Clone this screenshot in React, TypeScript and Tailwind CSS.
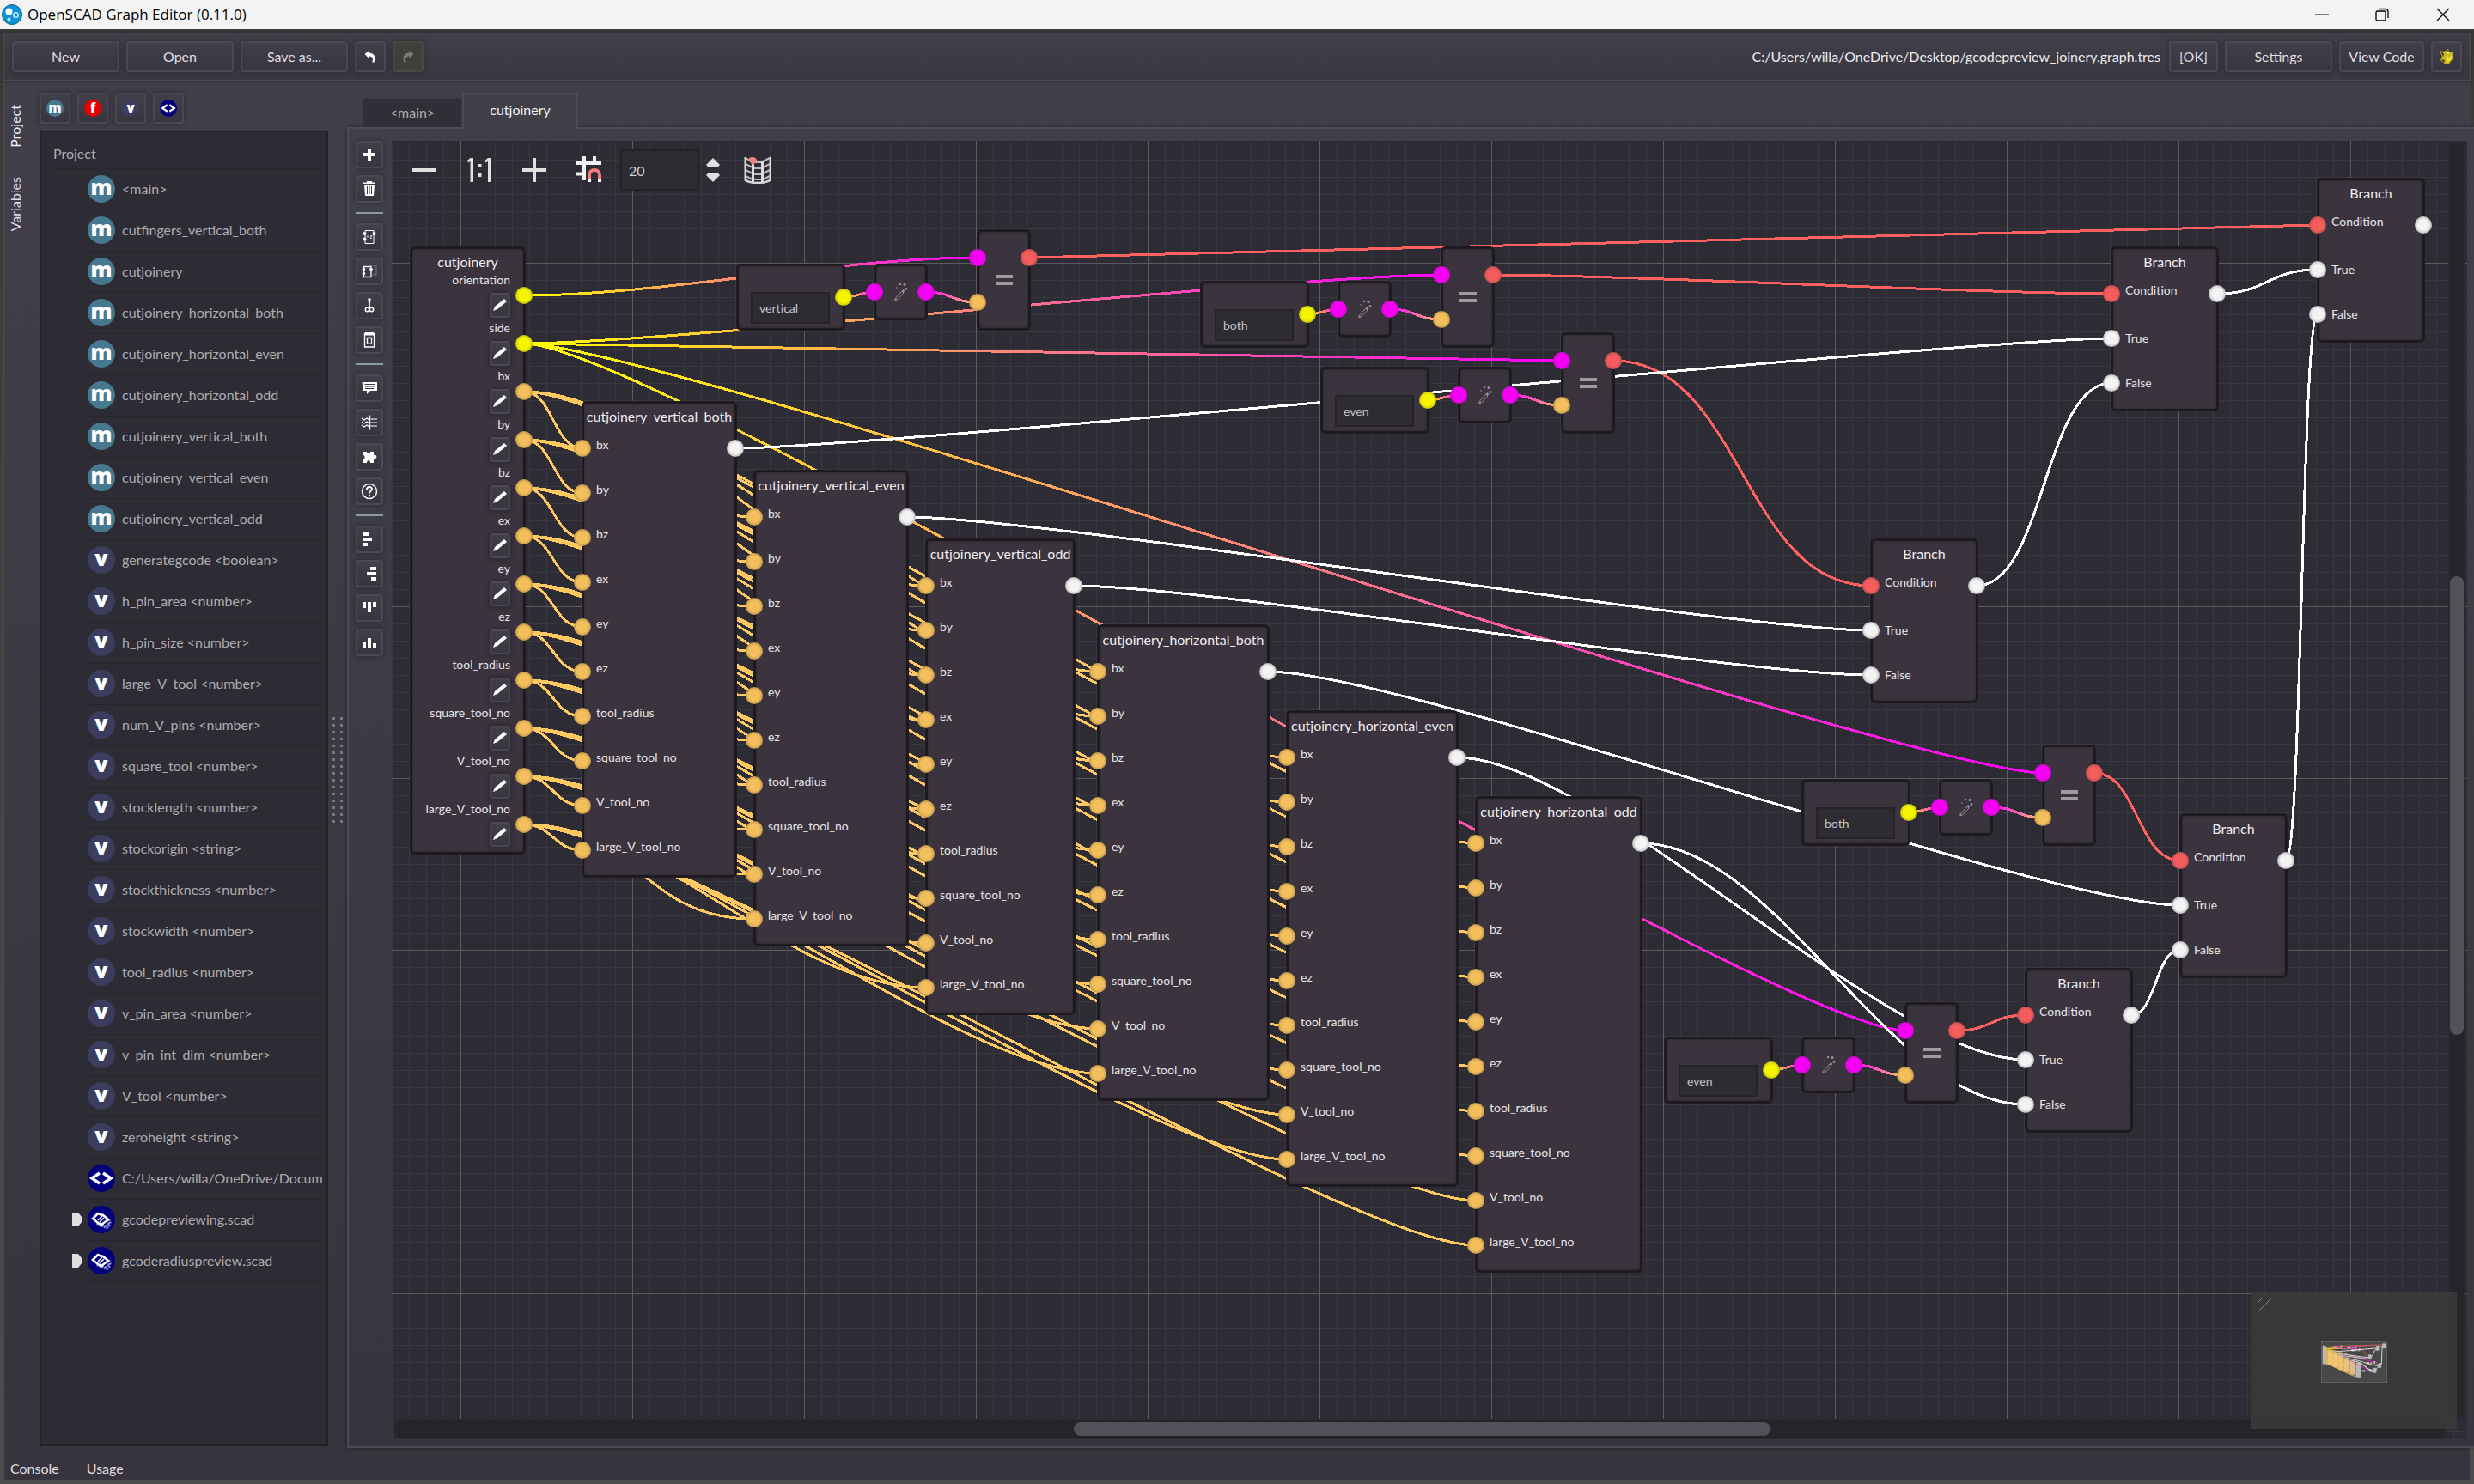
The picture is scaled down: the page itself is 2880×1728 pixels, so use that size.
import type { ReactNode } from "react";
import clsx from "clsx";

type Kind = "string" | "number" | "any" | "bool" | "geometry";

interface Port {
  side: "left" | "right";
  y: number;
  kind: Kind;
}

interface GraphNode {
  id: string;
  type: "entry" | "module" | "text" | "cast" | "equals" | "branch";
  x: number;
  y: number;
  w: number;
  h: number;
  title?: string;
  ports: Port[];
}

interface Wire {
  from: [number, number];
  to: [number, number];
  a: Kind;
  b: Kind;
}

const colors: Record<Kind, string> = {
  string: "#ffff00",
  number: "#ffc861",
  any: "#ff00ff",
  bool: "#ff6060",
  geometry: "#ffffff",
};

const portStyles: Record<Kind, string> = {
  string: "bg-[radial-gradient(circle,#f5f500_45%,#c6c60a_70%)]",
  number: "bg-[radial-gradient(circle,#f3bf5c_45%,#c49a4e_70%)]",
  any: "bg-[radial-gradient(circle,#f500f5_45%,#dc06dc_70%)]",
  bool: "bg-[radial-gradient(circle,#f55c5c_45%,#c85050_70%)]",
  geometry: "bg-[radial-gradient(circle,#f3f3f3_45%,#bdbdbd_70%)]",
};

const numberArgs = ["bx", "by", "bz", "ex", "ey", "ez", "tool_radius", "square_tool_no", "V_tool_no", "large_V_tool_no"];
const entryArgs = ["orientation", "side", ...numberArgs];

const tree = [
  ["m", "<main>"],
  ["m", "cutfingers_vertical_both"],
  ["m", "cutjoinery"],
  ["m", "cutjoinery_horizontal_both"],
  ["m", "cutjoinery_horizontal_even"],
  ["m", "cutjoinery_horizontal_odd"],
  ["m", "cutjoinery_vertical_both"],
  ["m", "cutjoinery_vertical_even"],
  ["m", "cutjoinery_vertical_odd"],
  ["v", "generategcode <boolean>"],
  ["v", "h_pin_area <number>"],
  ["v", "h_pin_size <number>"],
  ["v", "large_V_tool <number>"],
  ["v", "num_V_pins <number>"],
  ["v", "square_tool <number>"],
  ["v", "stocklength <number>"],
  ["v", "stockorigin <string>"],
  ["v", "stockthickness <number>"],
  ["v", "stockwidth <number>"],
  ["v", "tool_radius <number>"],
  ["v", "v_pin_area <number>"],
  ["v", "v_pin_int_dim <number>"],
  ["v", "V_tool <number>"],
  ["v", "zeroheight <string>"],
  ["code", "C:/Users/willa/OneDrive/Docum"],
  ["lib", "gcodepreviewing.scad"],
  ["lib", "gcoderadiuspreview.scad"],
];

function moduleNode(title: string, x: number, y: number, w: number): GraphNode {
  const ports: Port[] = numberArgs.map((_, i) => ({ side: "left", y: 55 + i * 52, kind: "number" }));
  ports.push({ side: "right", y: 55, kind: "geometry" });
  return { id: title, type: "module", title, x, y, w, h: 555, ports };
}

function compareNodes(text: string, x: number, y: number): GraphNode[] {
  return [
    { id: `text-${x}`, type: "text", title: text, x, y: y + 40, w: 127, h: 78, ports: [{ side: "right", y: 39, kind: "string" }] },
    {
      id: `cast-${x}`,
      type: "cast",
      x: x + 160,
      y: y + 40,
      w: 63,
      h: 66,
      ports: [
        { side: "left", y: 33, kind: "any" },
        { side: "right", y: 33, kind: "any" },
      ],
    },
    {
      id: `equals-${x}`,
      type: "equals",
      x: x + 280,
      y,
      w: 63,
      h: 118,
      ports: [
        { side: "left", y: 33, kind: "any" },
        { side: "left", y: 85, kind: "number" },
        { side: "right", y: 33, kind: "bool" },
      ],
    },
  ];
}

function branchNode(x: number, y: number): GraphNode {
  return {
    id: `branch-${x}`,
    type: "branch",
    title: "Branch",
    x,
    y,
    w: 126,
    h: 192,
    ports: [
      { side: "left", y: 55, kind: "bool" },
      { side: "left", y: 107, kind: "geometry" },
      { side: "left", y: 159, kind: "geometry" },
      { side: "right", y: 55, kind: "geometry" },
    ],
  };
}

const entry: GraphNode = {
  id: "entry",
  type: "entry",
  title: "cutjoinery",
  x: 21,
  y: 123,
  w: 135,
  h: 708,
  ports: entryArgs.map((_, i) => ({ side: "right", y: 57 + i * 56, kind: i < 2 ? "string" : "number" })),
};

const modules = [
  moduleNode("cutjoinery_vertical_both", 221, 303, 181),
  moduleNode("cutjoinery_vertical_even", 421, 383, 181),
  moduleNode("cutjoinery_vertical_odd", 621, 463, 175),
  moduleNode("cutjoinery_horizontal_both", 821, 563, 201),
  moduleNode("cutjoinery_horizontal_even", 1041, 663, 201),
  moduleNode("cutjoinery_horizontal_odd", 1261, 763, 195),
];

const comparisons = [
  compareNodes("vertical", 401, 103),
  compareNodes("both", 941, 123),
  compareNodes("even", 1081, 223),
  compareNodes("both", 1641, 703),
  compareNodes("even", 1481, 1003),
];

const branches = [
  branchNode(2241, 43),
  branchNode(2001, 123),
  branchNode(1721, 463),
  branchNode(2081, 783),
  branchNode(1901, 963),
];

const nodes = [entry, ...modules, ...comparisons.flat(), ...branches];

function connect(from: GraphNode, out: number, to: GraphNode, input: number): Wire {
  const a = from.ports.filter((p) => p.side === "right")[out];
  const b = to.ports.filter((p) => p.side === "left")[input];
  return {
    from: [from.x + from.w - 2, from.y + a.y],
    to: [to.x + 1, to.y + b.y],
    a: a.kind,
    b: b.kind,
  };
}

const wires: Wire[] = [
  ...modules.flatMap((m) => numberArgs.map((_, i) => connect(entry, i + 2, m, i))),
  ...comparisons.flatMap(([text, cast, equals], i) => [
    connect(entry, i === 0 ? 0 : 1, equals, 0),
    connect(text, 0, cast, 0),
    connect(cast, 0, equals, 1),
    connect(equals, 0, branches[i], 0),
  ]),
  connect(modules[0], 0, branches[1], 1),
  connect(modules[1], 0, branches[2], 1),
  connect(modules[2], 0, branches[2], 2),
  connect(modules[3], 0, branches[3], 1),
  connect(modules[4], 0, branches[4], 1),
  connect(modules[5], 0, branches[4], 2),
  connect(branches[1], 0, branches[0], 1),
  connect(branches[2], 0, branches[1], 2),
  connect(branches[3], 0, branches[0], 2),
  connect(branches[4], 0, branches[3], 2),
];

function wirePath({ from, to }: Wire) {
  const bend = Math.min(160, (to[0] - from[0]) / 2);
  return `M${from[0]} ${from[1]}C${from[0] + bend} ${from[1]} ${to[0] - bend} ${to[1]} ${to[0]} ${to[1]}`;
}

function Wires({ id, width }: { id: string; width: number }) {
  return (
    <>
      {wires.map((wire, i) => (
        <g key={i}>
          {wire.a !== wire.b && (
            <linearGradient id={`${id}-${i}`} gradientUnits="userSpaceOnUse" x1={wire.from[0]} y1="0" x2={wire.to[0]} y2="0">
              <stop offset="0" stopColor={colors[wire.a]} />
              <stop offset="1" stopColor={colors[wire.b]} />
            </linearGradient>
          )}
          <path d={wirePath(wire)} fill="none" stroke={wire.a === wire.b ? colors[wire.a] : `url(#${id}-${i})`} strokeWidth={width} />
        </g>
      ))}
    </>
  );
}

function Button({ className, label, disabled, children }: { className?: string; label?: string; disabled?: boolean; children: ReactNode }) {
  return (
    <button
      aria-label={label}
      disabled={disabled}
      className={clsx(
        "flex shrink-0 items-center justify-center rounded-sm border-2 shadow-[0_0_5px_2px_rgba(0,0,0,0.18)]",
        disabled ? "border-[#484844] bg-[#3f3f3b] text-[#7b7b78]" : "border-[#4a4854] bg-linear-to-b from-[#413f4a] to-[#37353e] text-[#e0dfe2]",
        className,
      )}
    >
      {children}
    </button>
  );
}

function Badge({ kind, small }: { kind: string; small?: boolean }) {
  return (
    <span
      className={clsx(
        "flex shrink-0 items-center justify-center rounded-full font-['Open_Sans',sans-serif] font-extrabold text-white",
        small ? "size-5 pb-0.5 text-[15px]" : "size-8 pb-1 text-[25px]",
        kind === "m" && "bg-[#46788f]",
        kind === "f" && "bg-[#e60000]",
        kind === "v" && "bg-[#3c3c5e]",
        (kind === "code" || kind === "lib") && "bg-[#00007f]",
      )}
    >
      {kind === "code" && (
        <svg viewBox="0 0 32 32" className={clsx("shrink-0", small ? "mt-0.5 size-5" : "mt-1 size-8")} fill="none" stroke="white" strokeWidth="3.5">
          <path d="M14 10 5 16l9 6M18 10l9 6-9 6" />
        </svg>
      )}
      {kind === "lib" && (
        <svg viewBox="0 0 32 32" className="mt-1 size-8 shrink-0" fill="none">
          <path d="M11 20l11 5 4-4-2-5" stroke="#9c9cd0" strokeWidth="4" strokeDasharray="2 1" />
          <path d="M12 9 6 15l6 5 4 2 8-6-6-5-4-1z" stroke="white" strokeWidth="2.500" />
          <path d="M12 17l5-5M14 19l5-5" stroke="white" strokeWidth="1.500" />
        </svg>
      )}
      {kind.length === 1 && kind}
    </span>
  );
}

function Icon({ name }: { name: string }) {
  const shapes: Record<string, ReactNode> = {
    add: <path d="M8 3h4v5h5v4h-5v5H8v-5H3V8h5z" />,
    trash: (
      <>
        <path d="M7 1h6v1.500h4V4H3V2.500h4z" />
        <path d="M4 5h12l-1 13H5zM7 7v9h1V7zm2.500 0v9h1V7zM12 7v9h1V7z" fillRule="evenodd" />
      </>
    ),
    node: (
      <>
        <path d="M5 2.500h10v15H5z" fill="none" stroke="currentColor" />
        <circle cx="4.500" cy="6" r="2" />
        <circle cx="15.500" cy="6" r="2" />
        <circle cx="4.500" cy="12.500" r="2" />
        <path d="M7 8.500l2 2m0-2-2 2M11 8.500h2l-2 3h2" fill="none" stroke="currentColor" strokeWidth="0.800" />
      </>
    ),
    duplicate: (
      <>
        <path d="M9 3h9v11h-4" fill="none" stroke="currentColor" opacity="0.350" />
        <path d="M3.500 4.500h8.500v12H3.500z" fill="none" stroke="currentColor" strokeWidth="1.300" />
        <circle cx="3.500" cy="7.500" r="1.800" />
        <circle cx="12" cy="7.500" r="1.800" />
        <circle cx="3.500" cy="12.500" r="1.800" />
      </>
    ),
    cut: (
      <>
        <path d="M9 1.500 10.500 12M11 1.500 9.500 12" fill="none" stroke="currentColor" strokeWidth="1.500" />
        <circle cx="7.500" cy="14.500" r="2.200" fill="none" stroke="currentColor" strokeWidth="1.500" />
        <circle cx="12.500" cy="14.500" r="2.200" fill="none" stroke="currentColor" strokeWidth="1.500" />
      </>
    ),
    paste: (
      <>
        <path d="M4.500 2.500h11v15.500h-11z" fill="none" stroke="currentColor" strokeWidth="1.300" />
        <path d="M5 1h10v3.500H5z" />
        <path d="M7.500 7h5v7h-5z" fill="none" stroke="currentColor" />
        <circle cx="7.500" cy="9" r="1" />
        <circle cx="12.500" cy="9" r="1" />
        <circle cx="7.500" cy="12" r="1" />
      </>
    ),
    comment: <path d="M1.500 3h17.500v10h-8l-4 4v-4H3zM4.500 5v1h12V5zm0 2.500v1h12v-1zM5 10v1h10v-1z" fillRule="evenodd" />,
    straighten: (
      <path
        d="M1 5l3 2 3-2 3 2M1 9l3 2 3-2 3 2M1 13l3 2 3-2 3 2M10.500 1.500v17M10 6h9M10 10h9M10 14h9"
        fill="none"
        stroke="currentColor"
        strokeWidth="1.200"
      />
    ),
    puzzle: <path d="M3 4h4c0 3 4 3 4 0h4v4c4-2 5 5 0 4v5h-4c0-4-4-4-4 0H3v-4c2 0 2-5 0-5z" />,
    help: (
      <>
        <circle cx="10" cy="10" r="8.500" fill="none" stroke="currentColor" strokeWidth="1.500" />
        <path d="M7 8c0-4 6-4 6-.500C13 9.500 10 9.500 10 12.500" fill="none" stroke="currentColor" strokeWidth="2" />
        <circle cx="10" cy="15" r="1.200" />
      </>
    ),
    left: <path d="M2 2h7v4H2zM2 8h11v4H2zM2 14h6v4H2z" />,
    right: <path d="M11 2h7v4h-7zM7 8h11v4H7zM12 14h6v4h-6z" />,
    top: <path d="M2 3h4v7H2zM8 3h4v12H8zM14 3h4v6h-4z" />,
    bottom: <path d="M2 10h4v7H2zM8 5h4v12H8zM14 11h4v6h-4z" />,
  };
  return (
    <svg viewBox="0 0 20 20" className="size-5 shrink-0 text-white" fill="currentColor">
      {shapes[name]}
    </svg>
  );
}

const toolGroups = [
  ["add", "trash"],
  ["node", "duplicate", "cut", "paste"],
  ["comment", "straighten", "puzzle", "help"],
  ["left", "right", "top", "bottom"],
];

function NodeBody({ node }: { node: GraphNode }) {
  if (node.type === "text") {
    return (
      <input
        aria-label="Text"
        defaultValue={node.title}
        className="mt-[30px] ml-3.5 h-[37px] w-[92px] border-2 border-[#25232a] bg-[#2d2c33] pl-2 text-sm text-[#c4c3c8]"
      />
    );
  }
  if (node.type === "cast") {
    return (
      <div className="flex h-full items-center justify-center">
        <svg viewBox="0 0 18 22" className="h-[22px] w-[18px] text-[#958f98]" fill="none" stroke="currentColor">
          <path d="M2.500 18 10 10l2 2-7.500 8z" />
          <g fill="currentColor" stroke="none">
            <path d="M1.500 18l3 3-3 0zM9.500 10l2-2 2 2-2 2z" />
            <circle cx="8" cy="2" r="1.200" />
            <circle cx="13" cy="2.500" r="1.600" />
            <circle cx="15" cy="7.500" r="1.400" />
            <circle cx="4" cy="6" r="0.800" />
          </g>
        </svg>
      </div>
    );
  }
  if (node.type === "equals") {
    return (
      <div className="flex h-full flex-col items-center justify-center gap-1">
        <span className="h-1 w-5 bg-[#a09aa2]" />
        <span className="h-1 w-5 bg-[#a09aa2]" />
      </div>
    );
  }
  return (
    <>
      <h2 className="pt-[5px] pb-px text-center text-base/5 whitespace-nowrap text-[#eeedef]">{node.title}</h2>
      {node.type === "entry" && (
        <ul className="pr-[15px]">
          {entryArgs.map((arg) => (
            <li key={arg} className="flex h-14 flex-col items-end gap-[5px] text-sm/5 text-[#e6e5e8]">
              {arg}
              <Button label={`Rename ${arg}`} className="h-[29px] w-6">
                <svg viewBox="0 1 20 20" className="size-5 shrink-0" fill="white">
                  <path d="M2 17 4 12 15 3l3 3L7 15z" />
                </svg>
              </Button>
            </li>
          ))}
        </ul>
      )}
      {node.type === "module" && (
        <ul className="pl-3.5">
          {numberArgs.map((arg) => (
            <li key={arg} className="flex h-[52px] items-center pb-2 text-sm text-[#e6e5e8]">
              {arg}
            </li>
          ))}
        </ul>
      )}
      {node.type === "branch" && (
        <ul className="pl-3.5 text-sm text-[#e6e5e8]">
          <li className="flex h-[52px] items-center pb-2">Condition</li>
          <li className="flex h-[52px] items-center">True</li>
          <li className="flex h-[52px] items-center">False</li>
        </ul>
      )}
    </>
  );
}

function NodeCard({ node }: { node: GraphNode }) {
  return (
    <section
      className="absolute rounded-md border-3 border-[#1d1b20] bg-[#3b333d] shadow-[inset_0_0_3px_rgba(0,0,0,0.3)]"
      style={{ left: node.x, top: node.y, width: node.w, height: node.h }}
    >
      <NodeBody node={node} />
      {node.ports.map((port, i) => (
        <span
          key={i}
          className={clsx("absolute size-5 rounded-full", port.side === "left" ? "-left-3" : "-right-[11px]", portStyles[port.kind])}
          style={{ top: port.y - 13 }}
        />
      ))}
    </section>
  );
}

function ZoomBar() {
  const tool = "flex h-12 w-14 items-center justify-center text-[#e0e0e0]";
  return (
    <div className="absolute top-2.5 left-2.5 flex items-center gap-2">
      <button aria-label="Zoom out" className={tool}>
        <svg viewBox="0 0 32 32" className="size-8" fill="currentColor">
          <path d="M2 14h28v4H2z" />
        </svg>
      </button>
      <button aria-label="Reset zoom" className={tool}>
        <svg viewBox="0 0 32 32" className="size-8" fill="currentColor">
          <path d="M5.500 2H9v28H5.500V6L2.500 7.500V4.500zM26 2h3.500v28H26V6l-3 1.500V4.500zM14.500 9h4v4h-4zM14.500 20h4v4h-4z" />
        </svg>
      </button>
      <button aria-label="Zoom in" className={tool}>
        <svg viewBox="0 0 32 32" className="size-8" fill="currentColor">
          <path d="M14 2h4v12h12v4H18v12h-4V18H2v-4h12z" />
        </svg>
      </button>
      <button aria-label="Snap to grid" className={tool}>
        <svg viewBox="0 0 32 32" className="size-8">
          <path d="M8 0h4v6h8V0h4v6h6v4H12v18H8v-5.500H0v-4h8V10H0V6h8z" fill="#f0f0f0" />
          <path d="M16 26v-4a6 6 0 0 1 12 0v4" fill="none" stroke="#f47c7c" strokeWidth="4" />
          <path d="M14 26h4v4h-4zM26 26h4v4h-4z" fill="white" />
        </svg>
      </button>
      <div className="flex">
        <input aria-label="Grid size" defaultValue="20" className="h-12 w-[92px] border-2 border-[#232127] bg-[#2d2c33] pl-2 text-base text-[#d0cfd3]" />
        <div className="flex w-8 flex-col items-center justify-center gap-2">
          <button aria-label="Increase">
            <svg viewBox="0 0 16 10" className="h-2.5 w-4 fill-[#e0e0e0]">
              <path d="M8 0 16 8 14 10H2L0 8z" />
            </svg>
          </button>
          <button aria-label="Decrease">
            <svg viewBox="0 0 16 10" className="h-2.5 w-4 fill-[#e0e0e0]">
              <path d="M8 10 0 2 2 0h12l2 2z" />
            </svg>
          </button>
        </div>
      </div>
      <button aria-label="Toggle minimap" className={tool}>
        <svg viewBox="0 0 32 32" className="size-8" fill="none" stroke="#dcdcdc">
          <path d="M1.500 1v27C8 32 24 32 30.500 28V1" strokeWidth="2" />
          <path d="M10.500 8v22M21.500 5v25" strokeWidth="3" />
          <path d="M2 2l8 5M22 6l8-4M10 7h12M2 9l8 4M10 14h12M22 13l8-4M2 16l8 4M10 21h12M22 20l8-4M2 23l8 4M10 27h12M22 27l8-4" strokeWidth="2" opacity="0.800" />
          <path d="M2 28c8 4 20 4 28 0" strokeWidth="3" opacity="0.700" />
          <path d="M6 2c3-2 8-1 9 2 0 3-3 4-4.500 7C9 8 5 6 6 2z" fill="#f08080" stroke="none" />
        </svg>
      </button>
    </div>
  );
}

function Minimap() {
  return (
    <div className="absolute right-3 bottom-3 h-40 w-60 bg-[#3a3a3a]/92">
      <svg viewBox="0 0 16 16" className="m-2 size-4 stroke-[#8a8a8a]" fill="none">
        <path d="M0 16 16 0M0 5l5-5" />
      </svg>
      <svg
        viewBox="0 0 2394 1490"
        preserveAspectRatio="none"
        className="absolute top-[58px] left-[82px] h-12 w-[77px] border border-[#5f5f5f] bg-[#484848]"
      >
        {nodes.map((node) => (
          <rect key={node.id} x={node.x} y={node.y} width={node.w} height={node.h} rx="40" fill="#b8b8b8" />
        ))}
        <g opacity="0.850">
          <Wires id="mini" width={30} />
        </g>
      </svg>
    </div>
  );
}

function Canvas() {
  return (
    <div className="relative min-w-0 flex-1 overflow-hidden bg-[#2d2b34]">
      <svg className="absolute inset-0 size-full" shapeRendering="crispEdges">
        <defs>
          <pattern id="minor" width="20" height="20" y="2" patternUnits="userSpaceOnUse">
            <path d="M0 0h20v1H1v19H0z" fill="white" fillOpacity="0.060" />
          </pattern>
          <pattern id="major" width="200" height="200" x="80" y="142" patternUnits="userSpaceOnUse">
            <path d="M0 0h200v1H1v199H0z" fill="white" fillOpacity="0.180" />
          </pattern>
        </defs>
        <rect width="100%" height="100%" fill="url(#minor)" />
        <rect width="100%" height="100%" fill="url(#major)" />
        <Wires id="wire" width={3} />
      </svg>
      {nodes.map((node) => (
        <NodeCard key={node.id} node={node} />
      ))}
      <ZoomBar />
      {/* scroll bars */}
      <div className="absolute top-0 right-0.5 bottom-6 flex w-5 flex-col rounded-lg border-2 border-[#2b2930] bg-[#252429]">
        <div className="h-[34%]" />
        <div className="h-[36%] rounded-full bg-[#52515a]" />
      </div>
      <div className="absolute right-6 bottom-0 left-0.5 h-6 rounded-lg border-2 border-[#2b2930] bg-[#252429] py-0.5">
        <div className="ml-[33.1%] h-4 w-[34%] rounded-full bg-[#52515a]" />
      </div>
      <Minimap />
    </div>
  );
}

function TitleBar() {
  return (
    <header className="flex h-[34px] shrink-0 items-center bg-[#f3f3f3] pl-0.5 font-['Open_Sans','Noto_Sans',sans-serif] text-black">
      <svg viewBox="0 0 24 24" className="size-6">
        <circle cx="12" cy="12" r="11.500" fill="#0a94dc" stroke="#20607f" />
        <circle cx="8.500" cy="8.500" r="4" fill="white" />
        <circle cx="16.500" cy="12.500" r="2.800" fill="none" stroke="#c8ecfc" strokeWidth="1.500" />
        <circle cx="8.500" cy="17.500" r="2" fill="#c8ecfc" />
      </svg>
      <h1 className="ml-1.5 text-[17px]">OpenSCAD Graph Editor (0.11.0)</h1>
      <div className="ml-auto flex">
        <button aria-label="Minimize" className="flex h-8 w-[70px] items-center justify-center">
          <svg viewBox="0 0 16 16" className="size-4" stroke="black">
            <path d="M0 8h16" />
          </svg>
        </button>
        <button aria-label="Restore" className="flex h-8 w-[70px] items-center justify-center">
          <svg viewBox="0 0 16 16" className="size-4" fill="none" stroke="black" strokeWidth="1.300">
            <rect x="1" y="4" width="11" height="11" rx="1.500" />
            <path d="M4 1.500h8a3 3 0 0 1 3 3V12" />
          </svg>
        </button>
        <button aria-label="Close" className="flex h-8 w-[72px] items-center justify-center">
          <svg viewBox="0 0 16 16" className="size-4" stroke="black" strokeWidth="1.300">
            <path d="M1 1l14 14M15 1 1 15" />
          </svg>
        </button>
      </div>
    </header>
  );
}

function Toolbar() {
  return (
    <div className="flex h-14 shrink-0 items-center gap-2 border border-[#4c4a56] bg-linear-to-b from-[#413f49] to-[#393740] px-[9px] shadow-[0_1px_4px_rgba(0,0,0,0.3)]">
      <Button className="h-9 w-[125px]">New</Button>
      <Button className="h-9 w-[125px]">Open</Button>
      <Button className="h-9 w-[125px]">Save as...</Button>
      <Button className="size-9" label="Undo">
        <svg viewBox="0 0 16 16" className="size-4 shrink-0" fill="white">
          <path d="M1.500 5 6.500 1v2.500c5 0 9 4.500 6 11h-2.500c2.500-4.500 0-7-3.500-7V10z" />
        </svg>
      </Button>
      <Button className="size-9" label="Redo" disabled>
        <svg viewBox="0 0 16 16" className="size-4 shrink-0" fill="currentColor">
          <path d="M14.500 5 9.500 1v2.500c-5 0-9 4.500-6 11H6c-2.500-4.500 0-7 3.500-7V10z" />
        </svg>
      </Button>
      <span className="ml-auto pr-0.5 text-[#eeedef]">C:/Users/willa/OneDrive/Desktop/gcodepreview_joinery.graph.tres</span>
      <Button className="h-9 w-[57px]">[OK]</Button>
      <Button className="h-9 w-[125px]">Settings</Button>
      <Button className="h-9 w-[99px]">View Code</Button>
      <Button className="size-9" label="Run">
        <svg viewBox="0 0 20 20" className="size-5 shrink-0">
          <path d="M2 3 7 4l5-3 2 3 4 2-1 7-4 5H8l-5-4 2-4z" fill="#c9b81e" />
          <path d="M9 9l4 2 3-3-1 6-4 3z" fill="#e9e03c" />
          <path d="M3 3l4 4-1 3zM9 2l3 4 3-3M4 13l4 1-1 3" fill="#35351a" />
          <circle cx="12" cy="5" r="1.500" fill="#f7f3a0" />
        </svg>
      </Button>
    </div>
  );
}

function Sidebar() {
  return (
    <aside className="flex w-[336px] shrink-0 flex-col gap-2 pt-3.5 pb-0.5">
      <div className="flex gap-2">
        {["m", "f", "v", "code"].map((kind) => (
          <Button key={kind} label={kind} className="size-9">
            <Badge kind={kind} small />
          </Button>
        ))}
      </div>
      <div className="min-h-0 flex-1 border-2 border-[#232227] bg-[#2d2b34] text-[#adacb0]">
        <div className="mr-1.5 ml-3.5 flex h-[43px] items-center border-b border-[#26252b] pt-2">Project</div>
        <ul>
          {tree.map(([kind, label]) => (
            <li key={label} className="flex h-12">
              <span className="flex w-[54px] shrink-0 items-center justify-end pr-1.5 pb-0.5">
                {kind === "lib" && (
                  <svg viewBox="0 0 12 16" className="h-4 w-3 fill-[#dedede]">
                    <path d="M0 0h7l5 6v4l-5 6H0z" />
                  </svg>
                )}
              </span>
              <span className="mr-1.5 flex min-w-0 flex-1 items-center gap-2 border-b border-[#26252b] pb-0.5 whitespace-nowrap">
                <Badge kind={kind} />
                {label}
              </span>
            </li>
          ))}
        </ul>
      </div>
    </aside>
  );
}

export default function App() {
  return (
    <div className="flex h-screen flex-col overflow-hidden bg-linear-to-b from-[#383835] to-[#4d4d4b] font-[Lato,sans-serif] text-base text-[#e0dfe2]">
      <TitleBar />
      <div className="m-1 flex min-h-0 flex-1 flex-col bg-linear-to-b from-[#423f4a] to-[#37343d]">
        <Toolbar />
        <main className="flex min-h-0 flex-1 border-l border-[#4c4a56]">
          <nav className="flex w-[41px] shrink-0 flex-col items-start gap-[34px] pt-7 pl-px">
            <button className="rotate-180 text-[#f4f4f5] [writing-mode:vertical-rl]">Project</button>
            <button className="rotate-180 [writing-mode:vertical-rl]">Variables</button>
          </nav>
          <Sidebar />
          <div className="flex w-[22px] shrink-0 items-center justify-center pt-3">
            <div className="grid grid-cols-2 gap-x-1.5 gap-y-[5px]">
              {Array.from({ length: 32 }, (_, i) => (
                <span key={i} className="size-[3px] bg-[#77767d]" />
              ))}
            </div>
          </div>
          <div className="-mr-1 flex min-w-0 flex-1 flex-col pt-3.5">
            <div className="z-10 flex h-10 items-end pl-[18px]">
              <button className="h-[34px] w-[116px] border border-b-0 border-[#3c3a44] bg-[#302e36] pb-0.5 text-[#adacb0]">&lt;main&gt;</button>
              <button className="-mb-0.5 h-[42px] w-[135px] border-2 border-b-0 border-[#4c4a56] bg-[#413f49] pb-1 text-[#f0f0f1]">cutjoinery</button>
            </div>
            <div className="flex min-h-0 flex-1 border-2 border-r-0 border-[#4c4a56] bg-linear-to-b from-[#413f49] to-[#38353e] pt-3.5 pr-2 pb-2 pl-2 shadow-[0_0_5px_rgba(0,0,0,0.4)]">
              <div className="mr-2.5 flex w-8 shrink-0 flex-col gap-2">
                {toolGroups.map((group, i) => (
                  <div key={i} className="flex flex-col gap-2">
                    {i > 0 && <hr className="mt-[3px] mb-[3px] border-t-2 border-[#8c9aa6]" />}
                    {group.map((name) => (
                      <Button key={name} label={name} className="size-8">
                        <Icon name={name} />
                      </Button>
                    ))}
                  </div>
                ))}
              </div>
              <Canvas />
            </div>
          </div>
        </main>
        <footer className="flex h-[38px] shrink-0 items-center gap-8 border border-t-0 border-[#4c4a56] pt-2.5 pl-[7px]">
          <button>Console</button>
          <button>Usage</button>
        </footer>
      </div>
    </div>
  );
}
